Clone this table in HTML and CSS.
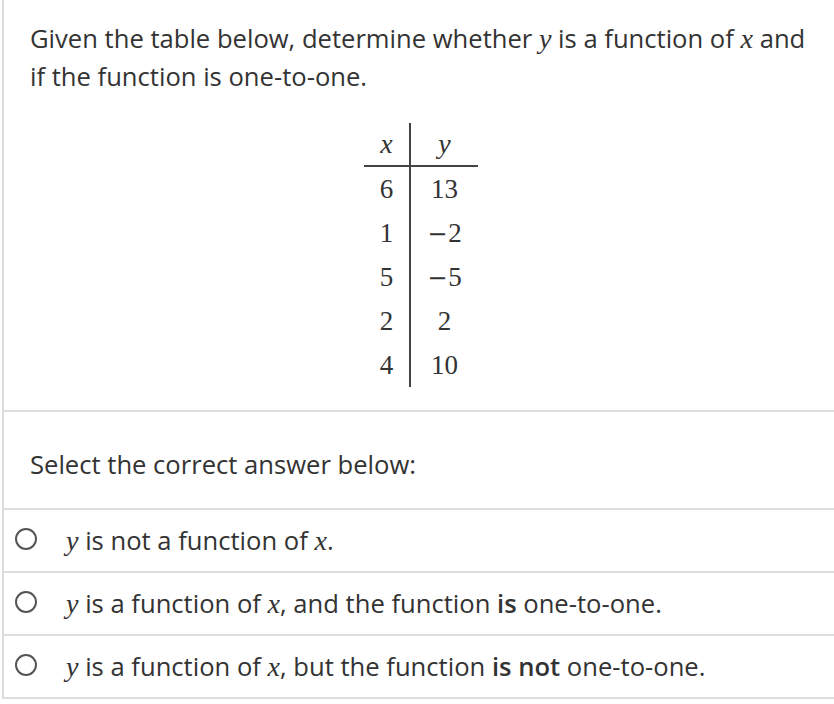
FILE: index.html
```html
<!DOCTYPE html>
<html>
<head>
<meta charset="utf-8">
<link rel="stylesheet" href="styles.css">
</head>
<body>
<div class="card">
  <section class="question">
    <p class="stem">Given the table below, determine whether <span class="m">y</span> is a function of <span class="m">x</span> and if the function is one-to-one.</p>
    <div class="table-wrap">
      <table class="xy">
        <tr><th class="c1"><span class="mi">x</span></th><th class="c2"><span class="mi">y</span></th></tr>
        <tr><td class="c1">6</td><td class="c2">13</td></tr>
        <tr><td class="c1">1</td><td class="c2"><span class="minus">−</span>2</td></tr>
        <tr><td class="c1">5</td><td class="c2"><span class="minus">−</span>5</td></tr>
        <tr><td class="c1">2</td><td class="c2">2</td></tr>
        <tr><td class="c1">4</td><td class="c2">10</td></tr>
      </table>
    </div>
  </section>
  <section class="prompt">Select the correct answer below:</section>
  <ul class="options">
    <li class="option"><span class="radio"></span><span class="label"><span class="m">y</span> is not a function of <span class="m">x</span>.</span></li>
    <li class="option"><span class="radio"></span><span class="label"><span class="m">y</span> is a function of <span class="m">x</span>, and the function <b>is</b> one-to-one.</span></li>
    <li class="option"><span class="radio"></span><span class="label"><span class="m">y</span> is a function of <span class="m">x</span>, but the function <b>is not</b> one-to-one.</span></li>
  </ul>
</div>
</body>
</html>
```

FILE: styles.css
```css
html, body {
  margin: 0;
  padding: 0;
  background: #fff;
}
body {
  font-family: "Open Sans", "Noto Sans", sans-serif;
  font-size: 25.6px;
  color: #333;
  overflow: hidden;
}
.card {
  margin-left: 2px;
  border-left: 2px solid #ddd;
  width: 860px;
}
.question {
  padding: 20px 28px 0 26px;
  border-bottom: 2px solid #ddd;
  height: 412px;
  box-sizing: border-box;
}
.stem {
  margin: 0;
  line-height: 38px;
  width: 790px;
}
.m, .mi {
  font-family: "Liberation Serif", "DejaVu Serif", serif;
  font-style: italic;
  font-size: 1.1em;
  line-height: 1;
}
.table-wrap {
  display: flex;
  justify-content: center;
  width: 834px;
  margin-left: -26px;
  padding-top: 27px;
}
.xy {
  border-collapse: collapse;
  font-family: "Liberation Serif", "DejaVu Serif", serif;
  font-size: 27px;
  color: #333;
}
.xy th, .xy td {
  height: 44px;
  padding: 0;
  text-align: center;
  font-weight: normal;
  vertical-align: middle;
}
.xy th {
  height: 42px;
  border-bottom: 2px solid #444;
}
.xy th .mi {
  font-size: 28px;
}
.minus {
  font-family: "DejaVu Serif", serif;
  font-size: 24px;
  margin-right: 1px;
}
.xy .c1 {
  width: 45px;
  border-right: 2px solid #444;
}
.xy .c2 {
  width: 67px;
}
.prompt {
  padding: 34px 28px 24px 26px;
  line-height: 38px;
  border-bottom: 2px solid #ddd;
}
.options {
  list-style: none;
  margin: 0;
  padding: 0;
}
.option {
  height: 61px;
  display: flex;
  align-items: center;
  border-bottom: 2px solid #ddd;
  line-height: 38px;
}
.radio {
  width: 18px;
  height: 18px;
  border: 2.5px solid #555;
  border-radius: 50%;
  margin-left: 11px;
  margin-right: 29px;
  margin-top: -3px;
  flex: none;
}
.label b {
  font-weight: 600;
}
```
